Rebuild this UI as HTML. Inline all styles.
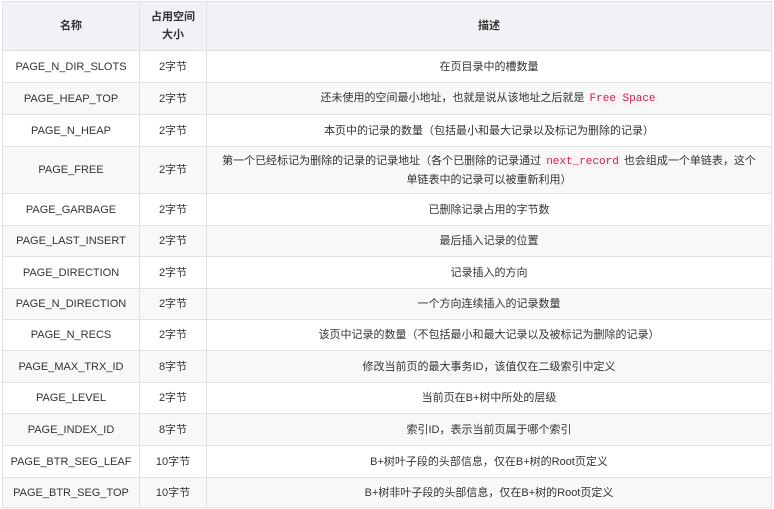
<!DOCTYPE html><html><head><meta charset="utf-8"><style>
body{margin:0;background:#fff;}
table{position:absolute;left:2px;top:1px;border-collapse:collapse;table-layout:fixed;width:770px;font-family:"Liberation Sans","Noto Sans CJK SC",sans-serif;font-size:11px;color:#333;}
td,th{border:1px solid #dfe2e5;text-align:center;padding:0 6px;line-height:18px;}
td:nth-child(3){padding:0 10px;}
th{background:#f0f2f5;font-weight:bold;}
tr:nth-child(odd) td{background:#f8f8f8;}
code{font-family:"Liberation Mono",monospace;color:#c7254e;background:#f9f2f4;font-size:11px;padding:0 2px;}
</style></head><body>
<table>
<colgroup><col style="width:137px"><col style="width:67px"><col></colgroup>
<tr style="height:49px"><th>名称</th><th>占用空间<br>大小</th><th>描述</th></tr>
<tr style="height:32px"><td>PAGE_N_DIR_SLOTS</td><td>2字节</td><td>在页目录中的槽数量</td></tr>
<tr style="height:32px"><td>PAGE_HEAP_TOP</td><td>2字节</td><td>还未使用的空间最小地址，也就是说从该地址之后就是 <code>Free Space</code></td></tr>
<tr style="height:32px"><td>PAGE_N_HEAP</td><td>2字节</td><td>本页中的记录的数量（包括最小和最大记录以及标记为删除的记录）</td></tr>
<tr style="height:47px"><td>PAGE_FREE</td><td>2字节</td><td>第一个已经标记为删除的记录的记录地址（各个已删除的记录通过 <code>next_record</code> 也会组成一个单链表，这个<br>单链表中的记录可以被重新利用）</td></tr>
<tr style="height:32px"><td>PAGE_GARBAGE</td><td>2字节</td><td>已删除记录占用的字节数</td></tr>
<tr style="height:31px"><td>PAGE_LAST_INSERT</td><td>2字节</td><td>最后插入记录的位置</td></tr>
<tr style="height:32px"><td>PAGE_DIRECTION</td><td>2字节</td><td>记录插入的方向</td></tr>
<tr style="height:31px"><td>PAGE_N_DIRECTION</td><td>2字节</td><td>一个方向连续插入的记录数量</td></tr>
<tr style="height:31px"><td>PAGE_N_RECS</td><td>2字节</td><td>该页中记录的数量（不包括最小和最大记录以及被标记为删除的记录）</td></tr>
<tr style="height:32px"><td>PAGE_MAX_TRX_ID</td><td>8字节</td><td>修改当前页的最大事务ID，该值仅在二级索引中定义</td></tr>
<tr style="height:31px"><td>PAGE_LEVEL</td><td>2字节</td><td>当前页在B+树中所处的层级</td></tr>
<tr style="height:32px"><td>PAGE_INDEX_ID</td><td>8字节</td><td>索引ID，表示当前页属于哪个索引</td></tr>
<tr style="height:32px"><td>PAGE_BTR_SEG_LEAF</td><td>10字节</td><td>B+树叶子段的头部信息，仅在B+树的Root页定义</td></tr>
<tr style="height:30px"><td>PAGE_BTR_SEG_TOP</td><td>10字节</td><td>B+树非叶子段的头部信息，仅在B+树的Root页定义</td></tr>
</table>
</body></html>
